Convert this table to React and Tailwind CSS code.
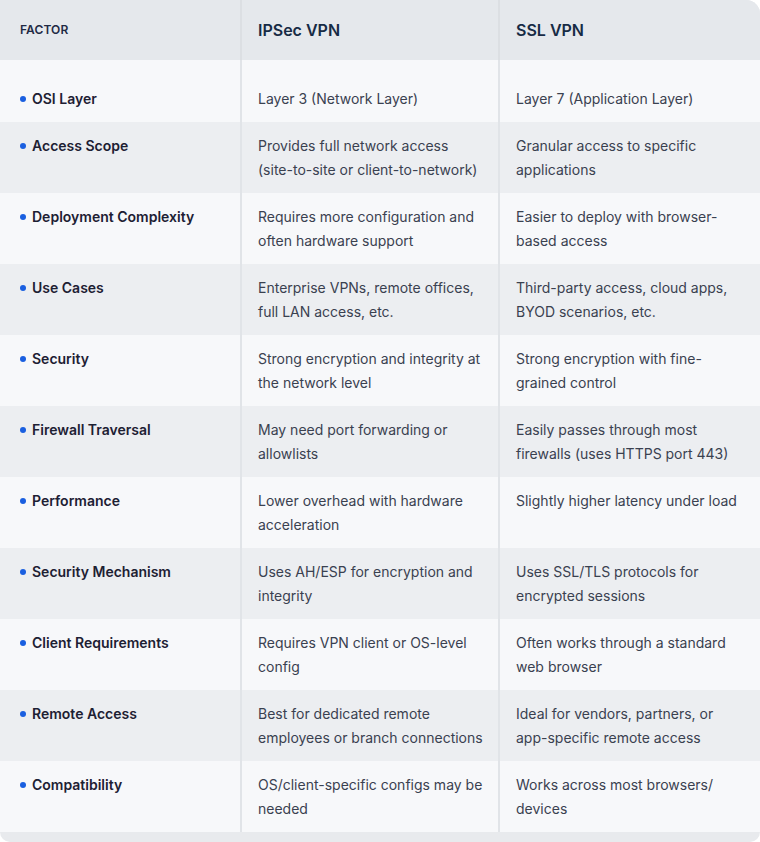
import React from "react";

const rows = [
  ["OSI Layer", "Layer 3 (Network Layer)", "Layer 7 (Application Layer)"],
  ["Access Scope", "Provides full network access (site-to-site or client-to-network)", "Granular access to specific applications"],
  ["Deployment Complexity", "Requires more configuration and often hardware support", "Easier to deploy with browser-based access"],
  ["Use Cases", "Enterprise VPNs, remote offices, full LAN access, etc.", "Third-party access, cloud apps, BYOD scenarios, etc."],
  ["Security", "Strong encryption and integrity at the network level", "Strong encryption with fine-grained control"],
  ["Firewall Traversal", "May need port forwarding or allowlists", "Easily passes through most firewalls (uses HTTPS port 443)"],
  ["Performance", "Lower overhead with hardware acceleration", "Slightly higher latency under load"],
  ["Security Mechanism", "Uses AH/ESP for encryption and integrity", "Uses SSL/TLS protocols for encrypted sessions"],
  ["Client Requirements", "Requires VPN client or OS-level config", "Often works through a standard web browser"],
  ["Remote Access", "Best for dedicated remote employees or branch connections", "Ideal for vendors, partners, or app-specific remote access"],
  ["Compatibility", "OS/client-specific configs may be needed", "Works across most browsers/ devices"],
];

export default function App() {
  return (
    <div className="w-[760px] h-[842px] bg-white font-['Inter',sans-serif]">
      <div className="bg-[#e8eaed] rounded-tr-[14px] rounded-b-[10px] overflow-hidden pb-[10px]">
        {/* header */}
        <div className="grid grid-cols-[242px_258px_260px] h-[60px] bg-[#e5e8ec]">
          <div className="flex items-center pl-5 border-r-2 border-[#dcdfe3] text-[12px] font-semibold uppercase text-[#1f2a44] tracking-[0.01em]">
            Factor
          </div>
          <div className="flex items-center pl-4 border-r-2 border-[#dcdfe3] text-[16px] font-semibold text-[#172b45]">
            IPSec VPN
          </div>
          <div className="flex items-center pl-4 text-[16px] font-semibold text-[#172b45]">
            SSL VPN
          </div>
        </div>

        {rows.map((r, i) => {
          const first = i === 0;
          const pad = first ? "pt-[27px] pb-[11px]" : "pt-[12px] pb-[11px]";
          const bg = i % 2 === 0 ? "bg-[#f7f8fa]" : "bg-[#eceef1]";
          return (
            <div key={r[0]} className={`grid grid-cols-[242px_258px_260px] ${bg} text-[14px] leading-6`}>
              <div className={`${pad} pl-5 pr-3 border-r-2 border-[#e1e4e8] flex items-start`}>
                <span className="mt-[9px] mr-[6px] w-[6px] h-[6px] rounded-full bg-[#1a5fe0] shrink-0"></span>
                <span className="font-semibold text-[#1d2033]">{r[0]}</span>
              </div>
              <div className={`${pad} pl-4 pr-[13px] border-r-2 border-[#e1e4e8] text-[#3a4150]`}>{r[1]}</div>
              <div className={`${pad} pl-4 pr-4 text-[#3a4150]`}>{r[2]}</div>
            </div>
          );
        })}
      </div>
    </div>
  );
}
